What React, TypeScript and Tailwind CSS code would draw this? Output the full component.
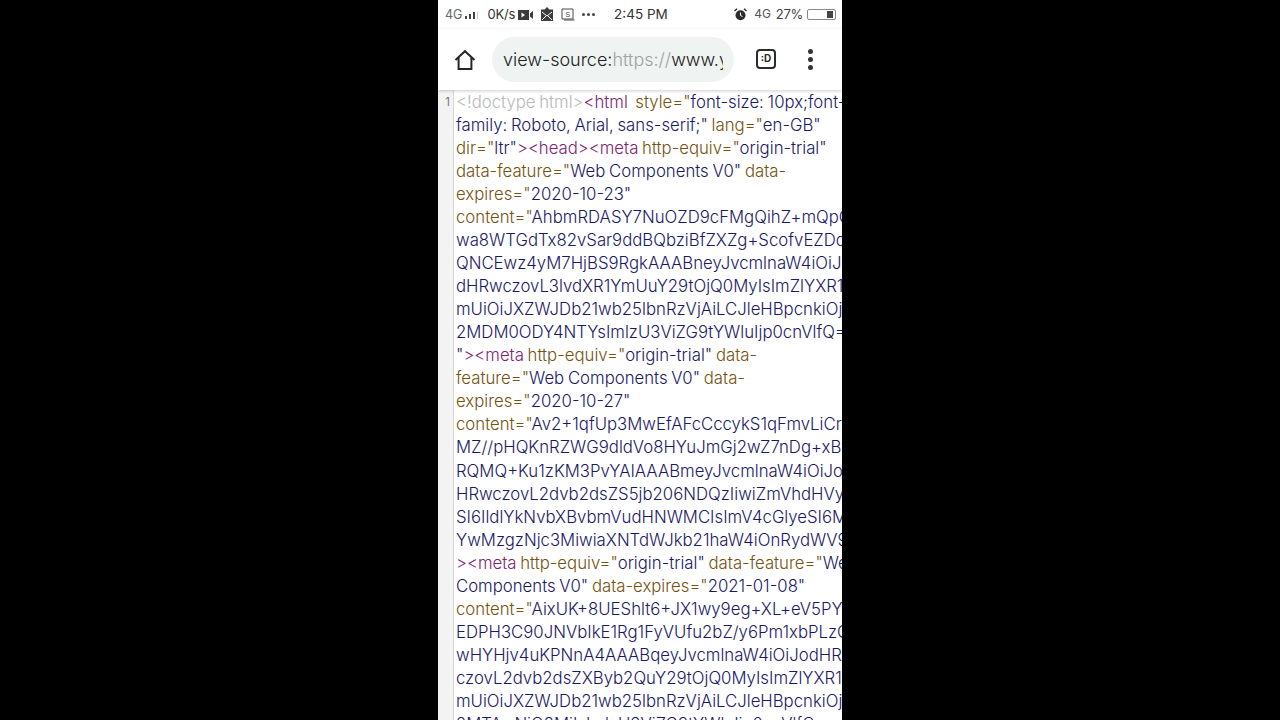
const tagc = 'text-[#7d2473]';
const attr = 'text-[#74530f]';
const val = 'text-[#1b1866]';
const doc = 'text-[#b8b8b8]';

type Seg = [string, string];

const lines: Seg[][] = [
  [['<!doctype html>', doc], ['<html', tagc], ['  style', attr], ['="', attr], ['font-size: 10px;font-', val]],
  [['family: Roboto, Arial, sans-serif;"', val], [' lang', attr], ['="', attr], ['en-GB"', val]],
  [['dir', attr], ['="', attr], ['ltr"', val], ['><head><meta', tagc], [' http-equiv', attr], ['="', attr], ['origin-trial"', val]],
  [['data-feature', attr], ['="', attr], ['Web Components V0"', val], [' data-', attr]],
  [['expires', attr], ['="', attr], ['2020-10-23"', val]],
  [['content', attr], ['="', attr], ['AhbmRDASY7NuOZD9cFMgQihZ+mQpCi', val]],
  [['wa8WTGdTx82vSar9ddBQbziBfZXZg+ScofvEZDdn', val]],
  [['QNCEwz4yM7HjBS9RgkAAABneyJvcmlnaW4iOiJo', val]],
  [['dHRwczovL3lvdXR1YmUuY29tOjQ0MyIsImZlYXR1', val]],
  [['mUiOiJXZWJDb21wb25lbnRzVjAiLCJleHBpcnkiOjE', val]],
  [['2MDM0ODY4NTYsImlzU3ViZG9tYWluIjp0cnVlfQ==', val]],
  [['"', val], ['><meta', tagc], [' http-equiv', attr], ['="', attr], ['origin-trial"', val], [' data-', attr]],
  [['feature', attr], ['="', attr], ['Web Components V0"', val], [' data-', attr]],
  [['expires', attr], ['="', attr], ['2020-10-27"', val]],
  [['content', attr], ['="', attr], ['Av2+1qfUp3MwEfAFcCccykS1qFmvLiCrm', val]],
  [['MZ//pHQKnRZWG9dldVo8HYuJmGj2wZ7nDg+xBk', val]],
  [['RQMQ+Ku1zKM3PvYAIAAABmeyJvcmlnaW4iOiJodH', val]],
  [['HRwczovL2dvb2dsZS5jb206NDQzIiwiZmVhdHVyZ', val]],
  [['SI6IldlYkNvbXBvbmVudHNWMCIsImV4cGlyeSI6MT', val]],
  [['YwMzgzNjc3MiwiaXNTdWJkb21haW4iOnRydWV9', val]],
  [['><meta', tagc], [' http-equiv', attr], ['="', attr], ['origin-trial"', val], [' data-feature', attr], ['="', attr], ['Web', val]],
  [['Components V0"', val], [' data-expires', attr], ['="', attr], ['2021-01-08"', val]],
  [['content', attr], ['="', attr], ['AixUK+8UEShlt6+JX1wy9eg+XL+eV5PYl', val]],
  [['EDPH3C90JNVbIkE1Rg1FyVUfu2bZ/y6Pm1xbPLzO', val]],
  [['wHYHjv4uKPNnA4AAABqeyJvcmlnaW4iOiJodHRw', val]],
  [['czovL2dvb2dsZXByb2QuY29tOjQ0MyIsImZlYXR1c', val]],
  [['mUiOiJXZWJDb21wb25lbnRzVjAiLCJleHBpcnkiOjE', val]],
  [['2MTAwNjQ2MiIsImlzU3ViZG9tYWluIjp0cnVlfQ==', val]],
];

const HomeIcon = () => (
  <svg width="22" height="22" viewBox="0 0 22 22" fill="none" stroke="#262626" strokeWidth="2" strokeLinejoin="miter">
    <path d="M1.5 11 11 2.2 20.5 11M4.6 8.6V20h12.8V8.6" />
  </svg>
);

const VideoIcon = () => (
  <svg width="16" height="10" viewBox="0 0 16 10" fill="#3a3a3a">
    <path d="M0 0h11v10H0zM12 3.5 15 1v8l-3-2.500z" />
    <path d="M3.500 2.500 7 5 3.500 7.500z" fill="#fff" />
  </svg>
);

const MailIcon = () => (
  <svg width="14" height="15" viewBox="0 0 14 15" fill="#3d3d3d">
    <path d="M7 0 9.500 2.500H13V14H1V2.500h3.500z" />
    <path d="m2 5 5 4 5-4M2 13l4-4M12 13 8 9" stroke="#fff" strokeWidth="1" fill="none" />
  </svg>
);

const SimIcon = () => (
  <svg width="14" height="13" viewBox="0 0 14 13" fill="none" stroke="#4a4a4a" strokeWidth="1">
    <path d="M1 1h11v10H1zM3 12h10.500" />
    <text x="4.500" y="9" fontSize="7" fontFamily="Liberation Sans, sans-serif" fill="#4a4a4a" stroke="none">S</text>
  </svg>
);

const AlarmIcon = () => (
  <svg width="13" height="13" viewBox="0 0 13 13">
    <circle cx="6.500" cy="7.300" r="5" fill="#2c2c2c" />
    <path d="M6.500 4.500v3l2 1" stroke="#fff" strokeWidth="1" fill="none" />
    <path d="M0.500 3 3 0.800 M10 0.800 12.500 3" stroke="#2c2c2c" strokeWidth="1.500" />
  </svg>
);

const StatusBar = () => (
  <div className="h-[29px] flex items-center text-[#4a4a4a] text-[13px] relative font-['Inter',sans-serif]">
    <span className="ml-[7px] text-[12.500px] text-[#666] mt-[1px]">4G</span>
    <span className="flex items-end gap-[2px] ml-[3px] h-[7px] mt-[2px]">
      <i className="w-[2px] h-[3px] bg-[#444]" />
      <i className="w-[2px] h-[5px] bg-[#444]" />
      <i className="w-[2px] h-[7px] bg-[#444]" />
      <i className="w-[1px] h-[7px] bg-[#ccc]" />
    </span>
    <span className="ml-[9px] text-[#333] tracking-[-0.2px]">0K/s</span>
    <span className="ml-[3px] flex"><VideoIcon /></span>
    <span className="ml-[6px] flex"><MailIcon /></span>
    <span className="ml-[7px] flex"><SimIcon /></span>
    <span className="ml-[7px] flex gap-[2px]">
      <i className="w-[3px] h-[3px] rounded-full bg-[#444]" />
      <i className="w-[3px] h-[3px] rounded-full bg-[#444]" />
      <i className="w-[3px] h-[3px] rounded-full bg-[#444]" />
    </span>
    <span className="ml-[19px] text-[13.500px] text-[#333]">2:45 PM</span>
    <span className="ml-auto flex"><AlarmIcon /></span>
    <span className="ml-[7px] text-[12px] text-[#555] -mt-[2px]">4G</span>
    <span className="ml-[5px] text-[13px] text-[#444] tracking-[-0.3px]">27%</span>
    <span className="ml-[4px] mr-[6px] w-[29px] h-[11px] rounded-[2px] border border-[#888] flex justify-end items-center pr-[2px]">
      <i className="w-[6px] h-[7px] bg-[#444]" />
    </span>
  </div>
);

const Toolbar = () => (
  <div className="h-[61px] flex items-center shadow-[0_1px_3px_rgba(0,0,0,0.2)] relative z-10 bg-white">
    <span className="ml-[16px] flex"><HomeIcon /></span>
    <div className="ml-[16px] w-[242px] h-[45px] rounded-[23px] bg-[#eff3f1] flex items-center pl-[11px] pr-[11px] overflow-hidden">
      <span className="text-[18px] font-light whitespace-nowrap overflow-hidden font-['Inter',sans-serif] text-[#222]">
        view-source:<span className="text-[#9ea3a0]">https://</span>www.youtube
      </span>
    </div>
    <div className="ml-[22px] mb-[2px] w-[20px] h-[20px] rounded-[4px] border-2 border-[#2b2b2b] flex items-center justify-center text-[10px] font-bold text-[#2b2b2b] font-['Inter',sans-serif]">
      :D
    </div>
    <div className="ml-[32px] flex flex-col gap-[3px]">
      <i className="w-[5px] h-[5px] rounded-full bg-[#333]" />
      <i className="w-[5px] h-[5px] rounded-full bg-[#333]" />
      <i className="w-[5px] h-[5px] rounded-full bg-[#333]" />
    </div>
  </div>
);

export default function App() {
  return (
    <div className="h-[720px] bg-black flex justify-center overflow-hidden">
      <div className="w-[404px] h-[720px] bg-white flex flex-col overflow-hidden">
        <StatusBar />
        <Toolbar />
        <div className="flex-1 flex overflow-hidden">
          <div className="w-[16px] bg-[#f3f3f3] border-r border-[#d6d6d6] text-[11.500px] text-[#777] text-right pr-[3px] pt-[1px] leading-[23px] font-['Inter',sans-serif]">
            1
          </div>
          <div className="flex-1 pl-[2px] pt-[1px] overflow-hidden font-['Inter',sans-serif] font-light text-[16.750px] leading-[23.035px] [word-spacing:-1px]">
            {lines.map((line, i) => (
              <div key={i} className="whitespace-pre">
                {line.map((s, j) => (
                  <span key={j} className={s[1]}>{s[0]}</span>
                ))}
              </div>
            ))}
          </div>
        </div>
      </div>
    </div>
  );
}
